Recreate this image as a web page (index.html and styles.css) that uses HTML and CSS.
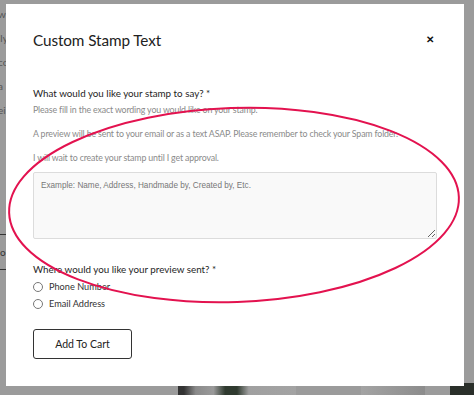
FILE: index.html
```html
<!DOCTYPE html>
<html lang="en">
<head>
    <meta charset="UTF-8">
    <meta name="viewport" content="width=device-width, initial-scale=1.0">
    <title>Custom Stamp Text</title>
    <link rel="stylesheet" href="styles.css">
</head>
<body>
    <div class="page">
        <div class="page-side">
            <p>w</p>
            <p>lly</p>
            <p>cc</p>
            <p>a</p>
            <p>ei</p>
            <div class="page-tab">o</div>
        </div>
        <div class="page-photos">
            <div class="photo photo-a"></div>
            <div class="photo photo-b"></div>
            <div class="photo photo-c"></div>
        </div>
    </div>

    <div class="overlay">
        <div class="modal">
            <div class="modal-head">
                <h2 class="modal-title">Custom Stamp Text</h2>
                <button class="close" aria-label="Close">&#x2715;</button>
            </div>

            <div class="field">
                <label class="question" for="stamp-text">What would you like your stamp to say? *</label>
                <p class="note">Please fill in the exact wording you would like on your stamp.</p>
                <p class="note">A preview will be sent to your email or as a text ASAP. Please remember to check your Spam folder.</p>
                <p class="note">I will wait to create your stamp until I get approval.</p>
                <textarea id="stamp-text" class="stamp-input" placeholder="Example: Name, Address, Handmade by, Created by, Etc."></textarea>
            </div>

            <div class="field">
                <div class="question">Where would you like your preview sent? *</div>
                <label class="choice"><span class="radio"></span>Phone Number</label>
                <label class="choice"><span class="radio"></span>Email Address</label>
            </div>

            <button class="cart-button">Add To Cart</button>

            <svg class="scribble" width="474" height="395" viewBox="0 0 474 395">
                <ellipse cx="234" cy="205" rx="225" ry="97" transform="rotate(-2 234 205)"
                         fill="none" stroke="#e3124f" stroke-width="2"/>
            </svg>
        </div>
    </div>
</body>
</html>
```

FILE: styles.css
```css
body {
    margin: 0;
    width: 474px;
    height: 395px;
    overflow: hidden;
    background-color: #9b9b9b;
    font-family: 'Lato', 'Liberation Sans', sans-serif;
    position: relative;
}
.page {
    height: 395px;
    display: flex;
    flex-direction: column;
    justify-content: space-between;
}
.page-side {
    padding-top: 8px;
    font-size: 10px;
    color: #555;
}
.page-side p {
    margin: 0 0 12px -2px;
}
.page-tab {
    margin-top: 118px;
    width: 8px;
    height: 34px;
    border-top: 1px solid #333;
    border-bottom: 1px solid #333;
    line-height: 34px;
    color: #333;
}
.page-photos {
    display: flex;
    justify-content: space-between;
    height: 12px;
    padding-left: 178px;
}
.photo {
    height: 12px;
}
.photo-a {
    width: 118px;
    background: linear-gradient(90deg, #333 0 5%, #8a8a8a 15%, #9a9a9a 30%, #2f3a2f 40%, #2f3a2f 50%, #a0a0a0 60%, #a3a3a3 100%);
}
.photo-b {
    width: 64px;
    margin-left: 40px;
    background: linear-gradient(90deg, #a3a3a3, #8c8c8c);
}
.photo-c {
    width: 24px;
    background: #2a2f2a;
}

/* modal */
.overlay {
    position: absolute;
    top: 0;
    left: 0;
    right: 0;
    bottom: 0;
}
.modal {
    position: relative;
    margin: 4px 0 0 6px;
    width: 458px;
    height: 382px;
    box-sizing: border-box;
    padding: 26px 33px 0 27px;
    background-color: #fff;
}
.modal-head {
    display: flex;
    justify-content: space-between;
    align-items: center;
    height: 20px;
}
.modal-title {
    margin: 0;
    font-size: 15.3px;
    line-height: 20px;
    font-weight: normal;
    color: #222;
    letter-spacing: -0.1px;
}
.close {
    border: none;
    background: none;
    padding: 0;
    margin-right: -3px;
    font-size: 10px;
    line-height: 10px;
    font-weight: bold;
    color: #111;
    cursor: pointer;
}
.field {
    margin-top: 37px;
}
.field + .field {
    margin-top: 24px;
}
.question {
    display: block;
    font-size: 9.8px;
    line-height: 12px;
    color: #1e1e1e;
    margin-bottom: 6px;
}
.field:first-of-type .question {
    letter-spacing: -0.2px;
}
.field + .field .question {
    margin-bottom: 3px;
}
.note {
    margin: 0 0 14px;
    font-size: 8.8px;
    line-height: 10px;
    letter-spacing: -0.15px;
    color: #8a8a8a;
    white-space: nowrap;
}
.note:last-of-type {
    margin-bottom: 9px;
}
.stamp-input {
    display: block;
    box-sizing: border-box;
    width: 404px;
    height: 67px;
    margin: 0;
    padding: 8px 7px;
    border: 1px solid #dcdcdc;
    border-radius: 2px;
    background-color: #f9f9f9;
    font-family: 'Liberation Sans', Arial, sans-serif;
    font-size: 8.2px;
    resize: vertical;
}
.stamp-input::placeholder {
    color: #777;
}
.choice {
    display: flex;
    align-items: center;
    gap: 6px;
    height: 17px;
    font-size: 9.2px;
    color: #333;
}
.radio {
    width: 8px;
    height: 8px;
    border: 1px solid #777;
    border-radius: 50%;
}
.cart-button {
    display: block;
    margin-top: 17px;
    width: 99px;
    height: 30px;
    border: 1.5px solid #333;
    border-radius: 3px;
    background: #fff;
    font-family: 'Lato', 'Liberation Sans', sans-serif;
    font-size: 10.5px;
    color: #222;
    cursor: pointer;
}
.scribble {
    position: absolute;
    top: -4px;
    left: -6px;
    pointer-events: none;
}
```
